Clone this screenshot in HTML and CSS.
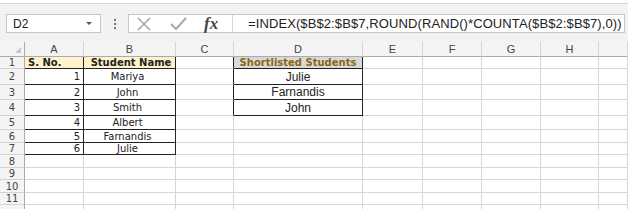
FILE: index.html
```html
<!doctype html>
<html lang="en">
<head>
  <meta charset="UTF-8" />
  <title>Random name from list</title>
  <link rel="stylesheet" href="styles.css">
</head>
<body>
  <main class="excel">
    <div class="ribbon-edge"></div>

    <div class="formula-bar">
      <div class="name-box">
        <span>D2</span>
        <span class="caret"></span>
      </div>
      <div class="grip"><i></i><i></i><i></i></div>
      <div class="formula-area">
        <div class="fx-buttons">
          <svg class="btn-cancel" width="14" height="14" viewBox="0 0 14 14">
            <path d="M1 1 L13 13 M13 1 L1 13" stroke="#a9a9a9" stroke-width="1.6" fill="none"/>
          </svg>
          <svg class="btn-enter" width="17" height="13" viewBox="0 0 17 13">
            <path d="M1 7 L6 12 L16 1" stroke="#a9a9a9" stroke-width="2" fill="none"/>
          </svg>
          <span class="fx">fx</span>
        </div>
        <div class="formula-input">=INDEX($B$2:$B$7,ROUND(RAND()*COUNTA($B$2:$B$7),0))</div>
      </div>
    </div>

    <div class="sheet">
      <!-- column headers -->
      <div class="corner"><span></span></div>
      <div class="col-head">A</div>
      <div class="col-head">B</div>
      <div class="col-head">C</div>
      <div class="col-head">D</div>
      <div class="col-head">E</div>
      <div class="col-head">F</div>
      <div class="col-head">G</div>
      <div class="col-head">H</div>
      <div class="col-head"></div>

      <!-- row 1 -->
      <div class="row-head">1</div>
      <div class="cell head-yellow br bb">S. No.</div>
      <div class="cell head-yellow br bb">Student Name</div>
      <div class="cell br"></div>
      <div class="cell head-gray br bb">Shortlisted Students</div>
      <div class="cell"></div><div class="cell"></div><div class="cell"></div><div class="cell"></div><div class="cell"></div>

      <!-- row 2 -->
      <div class="row-head">2</div>
      <div class="cell num br bb">1</div>
      <div class="cell name br bb">Mariya</div>
      <div class="cell br"></div>
      <div class="cell pick br bb">Julie</div>
      <div class="cell"></div><div class="cell"></div><div class="cell"></div><div class="cell"></div><div class="cell"></div>

      <!-- row 3 -->
      <div class="row-head">3</div>
      <div class="cell num br bb">2</div>
      <div class="cell name br bb">John</div>
      <div class="cell br"></div>
      <div class="cell pick br bb">Farnandis</div>
      <div class="cell"></div><div class="cell"></div><div class="cell"></div><div class="cell"></div><div class="cell"></div>

      <!-- row 4 -->
      <div class="row-head">4</div>
      <div class="cell num br bb">3</div>
      <div class="cell name br bb">Smith</div>
      <div class="cell br"></div>
      <div class="cell pick br bb">John</div>
      <div class="cell"></div><div class="cell"></div><div class="cell"></div><div class="cell"></div><div class="cell"></div>

      <!-- row 5 -->
      <div class="row-head">5</div>
      <div class="cell num br bb">4</div>
      <div class="cell name br bb">Albert</div>
      <div class="cell"></div><div class="cell"></div>
      <div class="cell"></div><div class="cell"></div><div class="cell"></div><div class="cell"></div><div class="cell"></div>

      <!-- row 6 -->
      <div class="row-head">6</div>
      <div class="cell num br bb">5</div>
      <div class="cell name br bb">Farnandis</div>
      <div class="cell"></div><div class="cell"></div>
      <div class="cell"></div><div class="cell"></div><div class="cell"></div><div class="cell"></div><div class="cell"></div>

      <!-- row 7 -->
      <div class="row-head">7</div>
      <div class="cell num br bb">6</div>
      <div class="cell name br bb">Julie</div>
      <div class="cell"></div><div class="cell"></div>
      <div class="cell"></div><div class="cell"></div><div class="cell"></div><div class="cell"></div><div class="cell"></div>

      <!-- empty rows -->
      <div class="row-head">8</div>
      <div class="cell"></div><div class="cell"></div><div class="cell"></div><div class="cell"></div><div class="cell"></div><div class="cell"></div><div class="cell"></div><div class="cell"></div><div class="cell"></div>

      <div class="row-head">9</div>
      <div class="cell"></div><div class="cell"></div><div class="cell"></div><div class="cell"></div><div class="cell"></div><div class="cell"></div><div class="cell"></div><div class="cell"></div><div class="cell"></div>

      <div class="row-head">10</div>
      <div class="cell"></div><div class="cell"></div><div class="cell"></div><div class="cell"></div><div class="cell"></div><div class="cell"></div><div class="cell"></div><div class="cell"></div><div class="cell"></div>

      <div class="row-head">11</div>
      <div class="cell"></div><div class="cell"></div><div class="cell"></div><div class="cell"></div><div class="cell"></div><div class="cell"></div><div class="cell"></div><div class="cell"></div><div class="cell"></div>

      <div class="row-head"></div>
      <div class="cell"></div><div class="cell"></div><div class="cell"></div><div class="cell"></div><div class="cell"></div><div class="cell"></div><div class="cell"></div><div class="cell"></div><div class="cell"></div>
    </div>
  </main>
</body>
</html>
```

FILE: styles.css
```css
* {
  margin: 0;
  padding: 0;
  box-sizing: border-box;
}

html, body {
  width: 628px;
  height: 209px;
  overflow: hidden;
  background-color: #fff;
  font-family: "Liberation Sans", Arial, sans-serif;
}

.excel {
  width: 628px;
  height: 209px;
  overflow: hidden;
}

.ribbon-edge {
  height: 4px;
  background-color: #fff;
  border-bottom: 1px solid #d5d5d5;
}

/* formula bar */
.formula-bar {
  height: 38px;
  background-color: #f2f2f2;
  display: flex;
  align-items: flex-start;
  padding: 10px 0 0 6px;
}

.name-box {
  width: 95px;
  height: 19px;
  background-color: #fff;
  border: 1px solid #c6c6c6;
  display: flex;
  align-items: center;
  justify-content: space-between;
  padding: 0 8px 0 6px;
  font-size: 12px;
  color: #222;
}

.caret {
  width: 0;
  height: 0;
  border-left: 3px solid transparent;
  border-right: 3px solid transparent;
  border-top: 3px solid #555;
}

.grip {
  width: 27px;
  height: 19px;
  display: flex;
  flex-direction: column;
  align-items: center;
  justify-content: center;
  gap: 2px;
}

.grip i {
  width: 2px;
  height: 2px;
  background-color: #777;
}

.formula-area {
  width: 497px;
  height: 19px;
  background-color: #fff;
  border: 1px solid #c6c6c6;
  display: flex;
}

.fx-buttons {
  width: 104px;
  display: flex;
  align-items: center;
  padding-left: 8px;
  border-right: 1px solid #d5d5d5;
}

.btn-cancel {
  margin-right: 19px;
}

.btn-enter {
  margin-right: 17px;
}

.fx {
  font-family: "Liberation Serif", "Times New Roman", serif;
  font-style: italic;
  font-weight: bold;
  font-size: 17px;
  color: #444;
  line-height: 17px;
}

.formula-input {
  flex: 1;
  padding-left: 15px;
  font-size: 13px;
  letter-spacing: 0.1px;
  line-height: 17px;
  color: #222;
  white-space: nowrap;
}

/* sheet grid */
.sheet {
  display: grid;
  grid-template-columns: 25px 59px 92px 58px 129px 60px 59px 59px 58px 1fr;
  grid-template-rows: 15px 12px 16px 15px 16px 14px 13px 12px 13px 12px 13px 12px 20px;
}

.corner,
.col-head {
  background-color: #f4f4f4;
  border-bottom: 1px solid #ababab;
  border-right: 1px solid #d4d4d4;
}

.corner {
  position: relative;
  border-right-color: #ababab;
}

.corner span {
  position: absolute;
  right: 3px;
  bottom: 3px;
  width: 0;
  height: 0;
  border-left: 6px solid transparent;
  border-bottom: 6px solid #c8c8c8;
}

.col-head {
  font-size: 11px;
  line-height: 15px;
  text-align: center;
  color: #444;
}

.row-head {
  background-color: #f4f4f4;
  border-right: 1px solid #ababab;
  border-bottom: 1px solid #d4d4d4;
  font-family: "DejaVu Sans", Verdana, sans-serif;
  font-size: 10px;
  color: #444;
  text-align: center;
  display: flex;
  align-items: center;
  justify-content: center;
}

.cell {
  border-right: 1px solid #d6d6d6;
  border-bottom: 1px solid #d6d6d6;
  font-family: "DejaVu Sans", Verdana, sans-serif;
  font-size: 10px;
  color: #222;
  display: flex;
  align-items: center;
  white-space: nowrap;
  overflow: hidden;
}

.cell.br {
  border-right-color: #222;
}

.cell.bb {
  border-bottom-color: #222;
}

.head-yellow {
  background-color: #fff2cc;
  font-weight: bold;
  padding-left: 3px;
}

.head-yellow + .head-yellow {
  justify-content: center;
}

.head-gray {
  background-color: #d9d9d9;
  color: #8a6614;
  font-weight: bold;
  justify-content: center;
}

.num {
  justify-content: flex-end;
  padding-right: 3px;
}

.name {
  justify-content: center;
  padding-right: 4px;
}

.pick {
  font-family: "Liberation Sans", Arial, sans-serif;
  font-size: 12px;
  justify-content: center;
}
```
